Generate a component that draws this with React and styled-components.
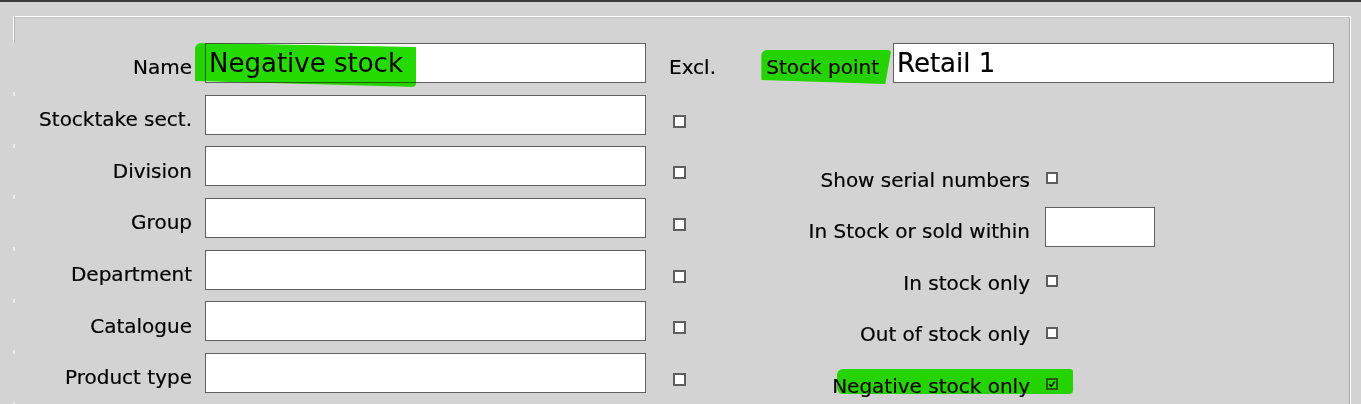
import React from 'react'
import styled, { createGlobalStyle } from 'styled-components'

const Global = createGlobalStyle`
  html, body {
    margin: 0;
    background: #d3d3d3;
  }
  body {
    font-family: "DejaVu Sans", Verdana, sans-serif;
    color: #000;
  }
`

const TopBar = styled.div`
  height: 2px;
  background: #3c3c3c;
`

const Frame = styled.div`
  position: relative;
  margin: 14px 10px 0 13px;
  padding: 24.67px 0 40px 2px;
  border-top: 1px solid #fff;
  border-right: 1px solid #fff;
  box-shadow: inset 0 1px #c6c6c6, inset -1px 0 #a9a9a9;

  &::before {
    content: '';
    position: absolute;
    left: 0;
    top: -1px;
    width: 2px;
    height: 27px;
    background: linear-gradient(to right, #fff 0 1px, #b5b5b5 1px 2px);
  }

  &::after {
    content: '';
    position: absolute;
    left: 0;
    top: 75px;
    bottom: 0;
    width: 2px;
    background: repeating-linear-gradient(
      to bottom,
      #ececec 0 4px,
      transparent 4px 51.67px
    );
  }
`

const Main = styled.div`
  display: flex;
  align-items: flex-start;
`

const LeftGrid = styled.div`
  display: grid;
  grid-template-columns: 190px 441px 94px;
  grid-auto-rows: 51.67px;
  align-items: center;
`

const Label = styled.div`
  position: relative;
  text-align: right;
  padding-right: ${p => p.$pad || 0}px;
  font-size: 20px;
  white-space: nowrap;
  -webkit-text-stroke: 0.2px #000;
`

const Field = styled.div`
  position: relative;
  display: flex;
  height: 40px;
  margin-bottom: 9px;
`

const TextBox = styled.input`
  box-sizing: border-box;
  width: ${p => p.$w || '100%'};
  height: 40px;
  margin: 0;
  padding: 0 3px;
  border: 1px solid #5f5f5f;
  border-radius: 0;
  background: #fff;
  color: #000;
  font-family: "DejaVu Sans", Verdana, sans-serif;
  font-size: 26px;
  outline: none;
  -webkit-text-stroke: 0.2px #000;
`

const ExclCell = styled.div`
  display: flex;
  align-items: center;
  padding-left: 23px;
  font-size: 20px;
  -webkit-text-stroke: 0.2px #000;
`

const Box = styled.span`
  box-sizing: border-box;
  display: inline-flex;
  align-items: center;
  justify-content: center;
  width: ${p => p.$size}px;
  height: ${p => p.$size}px;
  margin: ${p => p.$m || '0'};
  border: 2px solid #5e5e5e;
  background: #fff;
`

const Marker = styled.span`
  position: absolute;
  left: ${p => p.$x}px;
  top: ${p => p.$y}px;
  width: ${p => p.$w}px;
  height: ${p => p.$h}px;
  background: #24da00;
  mix-blend-mode: darken;
  pointer-events: none;
  border-radius: 6px 3px 4px 6px;
  clip-path: ${p => p.$clip || 'none'};
`

const RightSection = styled.div`
  width: 594px;
  display: flex;
  flex-direction: column;
`

const StockRow = styled.div`
  display: flex;
  justify-content: flex-end;
  align-items: center;
  gap: 14px;
  height: 51.67px;
`

const StockField = styled(Field)`
  width: 441px;
`

const Options = styled.div`
  margin-top: 60.9px;
  display: grid;
  grid-auto-rows: 51.5px;
`

const OptionRow = styled.div`
  position: relative;
  display: grid;
  grid-template-columns: 290px auto;
  column-gap: 15px;
  align-items: center;
`

const Tick = () => (
  <svg width="8" height="8" viewBox="0 0 8 8">
    <path d="M1 4.2 L3.2 6.3 L7 1.5" fill="none" stroke="#000" strokeWidth="1.6" />
  </svg>
)

const rows = [
  'Stocktake sect.',
  'Division',
  'Group',
  'Department',
  'Catalogue',
  'Product type'
]

const options = [
  { label: 'Show serial numbers', type: 'check' },
  { label: 'In Stock or sold within', type: 'input' },
  { label: 'In stock only', type: 'check' },
  { label: 'Out of stock only', type: 'check' },
  { label: 'Negative stock only', type: 'check', checked: true, marked: true }
]

export default function App() {
  return (
    <>
      <Global />
      <TopBar />
      <Frame>
        <Main>
          <LeftGrid>
            <Label $pad={13}>Name</Label>
            <Field>
              <TextBox defaultValue="Negative stock" readOnly />
              <Marker
                $x={-10}
                $y={0}
                $w={221}
                $h={44}
                $clip="polygon(0 0, 100% 4px, 100% 100%, 0 calc(100% - 6px))"
              />
            </Field>
            <ExclCell>Excl.</ExclCell>

            {rows.map(name => (
              <React.Fragment key={name}>
                <Label $pad={13}>{name}</Label>
                <Field>
                  <TextBox readOnly />
                </Field>
                <ExclCell>
                  <Box $size={13} $m="4px 0 0 4px" />
                </ExclCell>
              </React.Fragment>
            ))}
          </LeftGrid>

          <RightSection>
            <StockRow>
              <Label>
                Stock point
                <Marker
                  $x={-5}
                  $y={-5.5}
                  $w={130}
                  $h={34}
                  $clip="polygon(0 0, 100% 0, calc(100% - 6px) 100%, 0 calc(100% - 4px))"
                />
              </Label>
              <StockField>
                <TextBox defaultValue="Retail 1" readOnly />
              </StockField>
            </StockRow>

            <Options>
              {options.map(o => (
                <OptionRow key={o.label}>
                  <Label>{o.label}</Label>
                  {o.type === 'input' ? (
                    <Field>
                      <TextBox $w="110px" readOnly />
                    </Field>
                  ) : (
                    <Box $size={12} $m="0 0 3px 1px">
                      {o.checked && <Tick />}
                    </Box>
                  )}
                  {o.marked && <Marker $x={97} $y={9} $w={236} $h={25} />}
                </OptionRow>
              ))}
            </Options>
          </RightSection>
        </Main>
      </Frame>
    </>
  )
}
